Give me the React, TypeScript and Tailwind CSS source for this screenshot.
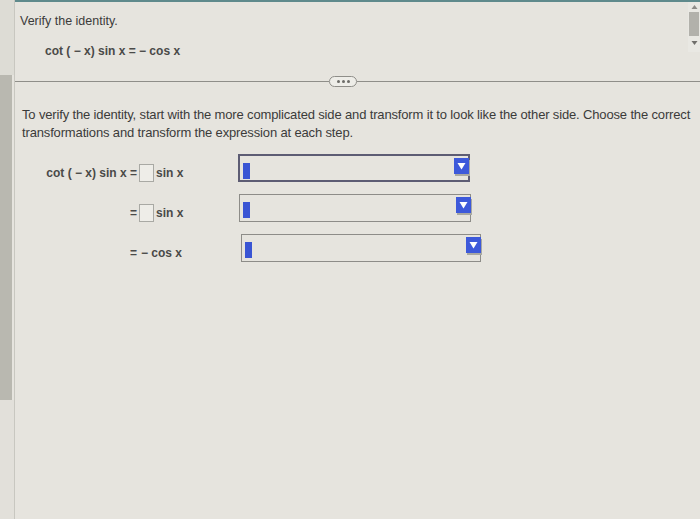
import { ReactNode } from "react";

function Box() {
  return <span className="mx-[2px] inline-block h-[18px] w-[15px] border border-[#a9a9a4] bg-[#eeede8] align-middle" />;
}

function Dropdown({ focused = false, className = "" }: { focused?: boolean; className?: string }) {
  return (
    <div
      className={`relative h-[28px] w-[232px] ${
        focused ? "border-2 border-[#5d5c73]" : "border border-[#8d8c88]"
      } ${className}`}
    >
      {/* caret */}
      <div className="absolute left-[3px] top-[7px] h-[16px] w-[7px] bg-[#3a55d4]" />
      {/* arrow button */}
      <div className="absolute right-[-1px] top-[2px] flex h-[16px] w-[15px] items-center justify-center bg-[#3d59da] shadow-[1px_2px_0_#a9a8a2]">
        <svg width="9" height="8" viewBox="0 0 9 8">
          <path d="M0.5 1 L8.5 1 L4.5 7.5 Z" fill="#ffffff" />
        </svg>
      </div>
    </div>
  );
}

function Row({ label, children, dropdown }: { label: ReactNode; children?: ReactNode; dropdown: ReactNode }) {
  return (
    <div className="flex h-[40px] items-center">
      <div className="w-[122px] text-right font-bold text-[#4a4a48]">{label}</div>
      <div className="flex w-[101px] items-center font-bold text-[#4a4a48]">{children}</div>
      <div className="-mt-[10px]">{dropdown}</div>
    </div>
  );
}

export default function App() {
  return (
    <div className="relative flex h-[519px] w-[700px] overflow-hidden bg-[#e6e4de] text-[12px] text-[#3b3b3a] [font-family:'Liberation_Sans',Arial,sans-serif]">
      {/* left frame strip */}
      <div className="flex w-[15px] shrink-0 flex-col border-r border-[#c8c7c0]">
        <div className="h-[75px] bg-[#dddcd5]" />
        <div className="h-[325px] w-[12px] bg-[#b9b8b0]" />
        <div className="flex-1 bg-[#e2e0da]" />
      </div>

      <div className="flex flex-1 flex-col">
        <div className="h-[2px] bg-[#5f8a8c]" />

        <div className="pl-[5px] pt-[11px] text-[12.5px] leading-[16px]">Verify the identity.</div>

        <div className="pl-[30px] pt-[14px] font-bold leading-[16px] text-[#4a4a48]">
          cot ( − x) sin x = − cos x
        </div>

        {/* divider with more button */}
        <div className="mt-[17px] flex items-center">
          <div className="h-px w-[314px] bg-[#8f8e89]" />
          <div className="flex h-[11px] w-[28px] items-center justify-center gap-[2px] rounded-full border border-[#8f8e89] bg-[#eeede8]">
            <span className="h-[3px] w-[3px] rounded-full bg-[#6d6c68]" />
            <span className="h-[3px] w-[3px] rounded-full bg-[#6d6c68]" />
            <span className="h-[3px] w-[3px] rounded-full bg-[#6d6c68]" />
          </div>
          <div className="h-px flex-1 bg-[#8f8e89]" />
        </div>

        <p className="pl-[7px] pr-[4px] pt-[19px] text-[13px] leading-[18px] tracking-[-0.15px]">
          To verify the identity, start with the more complicated side and transform it to look like the other side. Choose the correct
          transformations and transform the expression at each step.
        </p>

        <div className="mt-[11px] flex flex-col">
          <Row label="cot ( − x) sin x =" dropdown={<Dropdown focused />}>
            <Box />
            <span>sin x</span>
          </Row>
          <Row label="=" dropdown={<Dropdown className="ml-[1px]" />}>
            <Box />
            <span>sin x</span>
          </Row>
          <Row label="=" dropdown={<Dropdown className="ml-[3px] w-[240px]" />}>
            <span className="ml-[4px]">− cos x</span>
          </Row>
        </div>
      </div>

      {/* scrollbar */}
      <div className="absolute right-0 top-[2px] flex h-[50px] w-[12px] flex-col items-center bg-[#e9e8e3]">
        <svg width="7" height="6" viewBox="0 0 7 6" className="mt-[2px]">
          <path d="M3.5 1 L6.5 5 L0.5 5 Z" fill="#8c8b87" />
        </svg>
        <div className="mt-[2px] h-[24px] w-[10px] bg-[#b2b1ab]" />
        <svg width="7" height="6" viewBox="0 0 7 6" className="mt-[4px]">
          <path d="M0.5 1 L6.5 1 L3.5 5 Z" fill="#6f6e6a" />
        </svg>
      </div>
    </div>
  );
}
